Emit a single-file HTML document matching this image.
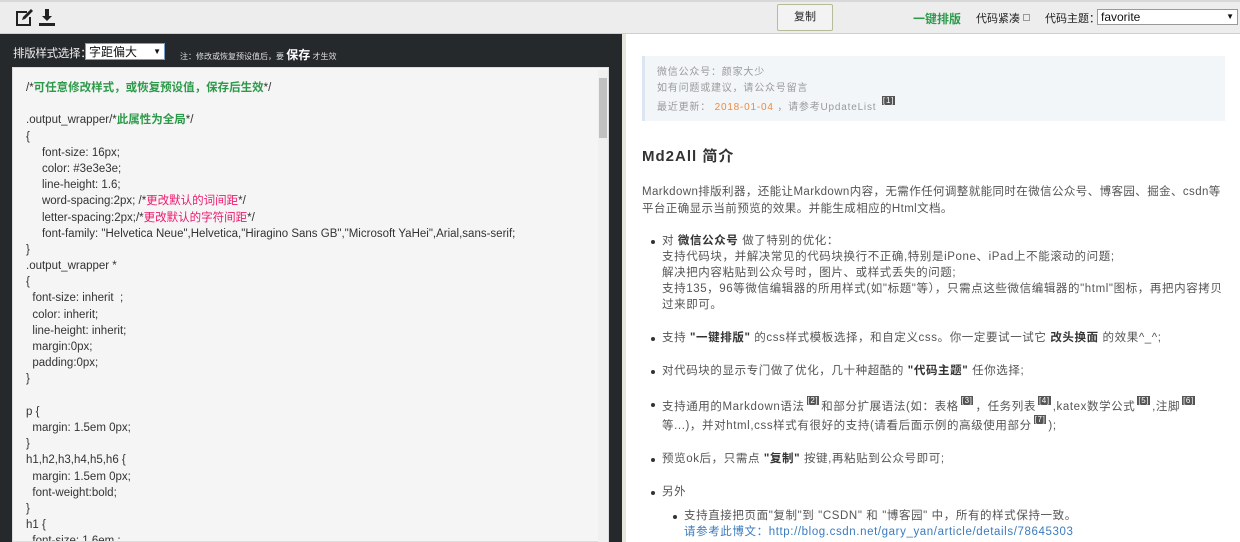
<!DOCTYPE html>
<html><head><meta charset="utf-8"><style>
*{margin:0;padding:0;box-sizing:border-box}
body{width:1240px;height:542px;overflow:hidden;font-family:"Liberation Sans","Noto Sans CJK SC",sans-serif;background:#fff;position:relative}
#top{position:absolute;left:0;top:0;width:1240px;height:34px;background:#ededed;border-top:2px solid #d8d8d8;border-bottom:1px solid #cfcfcf}
#left{position:absolute;left:0;top:34px;width:622px;height:508px;background:#26292c}
#strip{position:absolute;left:622px;top:34px;width:4px;height:508px;background:#e6e6dc}
#sel1{position:absolute;left:13px;top:45px;color:#eee;font-size:11.5px;letter-spacing:-.3px}
.select{position:absolute;background:#fff;border:1px solid #7b9acb;font-size:12px;color:#111;padding:1px 3px}
#editor{position:absolute;left:12px;top:67px;width:597px;height:475px;background:#f5f5f5;border:1px solid #ddd;font-size:11.5px;color:#333;line-height:16.2px;padding:12px 0 0 13px;overflow:hidden}
#editor div{height:16.2px;white-space:pre}
.g{color:#2c9a4a;font-weight:bold}.r{color:#f0186e}
#sb{position:absolute;left:598px;top:70px;width:10px;height:472px;background:#f0f0f0}
#thumb{position:absolute;left:599px;top:78px;width:8px;height:60px;background:#c1c1c1}
#right{position:absolute;left:626px;top:34px;width:614px;height:508px;color:#555;font-size:12px}
#bq{position:absolute;left:16px;top:22px;width:583px;height:65px;background:#f3f6f9;border-left:3px solid #dce6f0;padding:9px 0 0 12px;font-size:10px;color:#999;line-height:15.5px;letter-spacing:.8px}
.fn{display:inline-block;background:#555;color:#fff;font-size:8px;line-height:9px;padding:0 1px;vertical-align:7px;margin:0 2px}
#h2{position:absolute;left:16px;top:111px;font-size:15px;font-weight:bold;color:#333;letter-spacing:1px}
#p{position:absolute;left:16px;top:150px;width:594px;line-height:17px;letter-spacing:.4px;font-size:11.5px}
ul{position:absolute;left:22px;top:199px;width:580px;list-style:none;font-size:11.5px;line-height:16px;letter-spacing:.6px}
li{position:relative;padding-left:14px;margin-bottom:17px}
li:before{content:"";position:absolute;left:3px;top:7px;width:4px;height:4px;border-radius:2px;background:#333}
b{color:#333}
</style></head><body>
<div id="top">
<svg style="position:absolute;left:15px;top:7px" width="20" height="18" viewBox="0 0 20 18"><path d="M12 3H2v13h13V8" fill="none" stroke="#222" stroke-width="2"/><path d="M7 11l1-3 8-8 2 2-8 8z" fill="#222"/></svg>
<svg style="position:absolute;left:38px;top:6px" width="18" height="18" viewBox="0 0 18 18"><path d="M7 1h4v7h3l-5 5-5-5h3z" fill="#222"/><rect x="1" y="15" width="16" height="3" fill="#222"/></svg>
<div style="position:absolute;left:777px;top:2px;width:56px;height:27px;border:1px solid #b8bb9a;border-radius:2px;background:#f3f3f3;font-size:11px;text-align:center;line-height:25px;color:#222">复制</div>
<div style="position:absolute;left:913px;top:8px;font-size:12px;font-weight:bold;color:#2c9a4a">一键排版</div>
<div style="position:absolute;left:976px;top:8px;font-size:11px;color:#222">代码紧凑 <span style="display:inline-block;width:7px;height:7px;border:1px solid #999;vertical-align:1px"></span></div>
<div style="position:absolute;left:1045px;top:8px;font-size:11px;color:#222">代码主题：</div>
<div class="select" style="left:1097px;top:7px;width:141px;height:16px;border-color:#999;padding:0 3px;line-height:14px">favorite<span style="position:absolute;right:3px;font-size:8px">▼</span></div>
</div>
<div id="left"></div><div id="strip"></div>
<div id="sel1">排版样式选择：</div>
<div class="select" style="left:85px;top:43px;width:80px;height:17px;line-height:14px">字距偏大<span style="position:absolute;right:3px;font-size:8px">▼</span></div>
<div style="position:absolute;left:180px;top:46px;font-size:8px;color:#ddd">注：修改或恢复预设值后，要 <b style="color:#fff;font-size:12px">保存</b> 才生效</div>
<div id="editor">
<div>/*<span class="g">可任意修改样式，或恢复预设值，保存后生效</span>*/</div>
<div> </div>
<div>.output_wrapper/*<span class="g">此属性为全局</span>*/</div>
<div>{</div>
<div>     font-size: 16px;</div>
<div>     color: #3e3e3e;</div>
<div>     line-height: 1.6;</div>
<div>     word-spacing:2px; /*<span class="r">更改默认的词间距</span>*/</div>
<div>     letter-spacing:2px;/*<span class="r">更改默认的字符间距</span>*/</div>
<div>     font-family: "Helvetica Neue",Helvetica,"Hiragino Sans GB","Microsoft YaHei",Arial,sans-serif;</div>
<div>}</div>
<div>.output_wrapper *</div>
<div>{</div>
<div>  font-size: inherit  ;</div>
<div>  color: inherit;</div>
<div>  line-height: inherit;</div>
<div>  margin:0px;</div>
<div>  padding:0px;</div>
<div>}</div>
<div> </div>
<div>p {</div>
<div>  margin: 1.5em 0px;</div>
<div>}</div>
<div>h1,h2,h3,h4,h5,h6 {</div>
<div>  margin: 1.5em 0px;</div>
<div>  font-weight:bold;</div>
<div>}</div>
<div>h1 {</div>
<div>  font-size: 1.6em ;</div>
</div>
<div id="sb"></div><div id="thumb"></div>
<div id="right">
<div id="bq">微信公众号：颜家大少<br>如有问题或建议，请公众号留言<br>最近更新： <span style="color:#f08a3c">2018-01-04</span> ，请参考UpdateList <span class="fn">[1]</span></div>
<div id="h2">Md2All 简介</div>
<div id="p">Markdown排版利器，还能让Markdown内容，无需作任何调整就能同时在微信公众号、博客园、掘金、csdn等<br>平台正确显示当前预览的效果。并能生成相应的Html文档。</div>
<ul>
<li>对 <b>微信公众号</b> 做了特别的优化：<br>支持代码块，并解决常见的代码块换行不正确,特别是iPone、iPad上不能滚动的问题;<br>解决把内容粘贴到公众号时，图片、或样式丢失的问题;<br>支持135，96等微信编辑器的所用样式(如"标题"等），只需点这些微信编辑器的"html"图标，再把内容拷贝过来即可。</li>
<li>支持 <b>"一键排版"</b> 的css样式模板选择，和自定义css。你一定要试一试它 <b>改头换面</b> 的效果^_^;</li>
<li>对代码块的显示专门做了优化，几十种超酷的 <b>"代码主题"</b> 任你选择;</li>
<li>支持通用的Markdown语法<span class="fn">[2]</span>和部分扩展语法(如：表格<span class="fn">[3]</span>，任务列表<span class="fn">[4]</span>,katex数学公式<span class="fn">[5]</span>,注脚<span class="fn">[6]</span>等...)，并对html,css样式有很好的支持(请看后面示例的高级使用部分<span class="fn">[7]</span>);</li>
<li>预览ok后，只需点 <b>"复制"</b> 按键,再粘贴到公众号即可;</li>
<li style="margin-bottom:8px">另外</li>
</ul>
<div style="position:absolute;left:58px;top:474px;font-size:11.5px;line-height:16px;letter-spacing:.6px"><span style="position:absolute;left:-11px;top:7px;width:4px;height:4px;border-radius:2px;background:#333"></span>支持直接把页面"复制"到 "CSDN" 和 "博客园" 中，所有的样式保持一致。<br><span style="color:#3b7bbf">请参考此博文：http://blog.csdn.net/gary_yan/article/details/78645303</span></div>
</div>
</body></html>
